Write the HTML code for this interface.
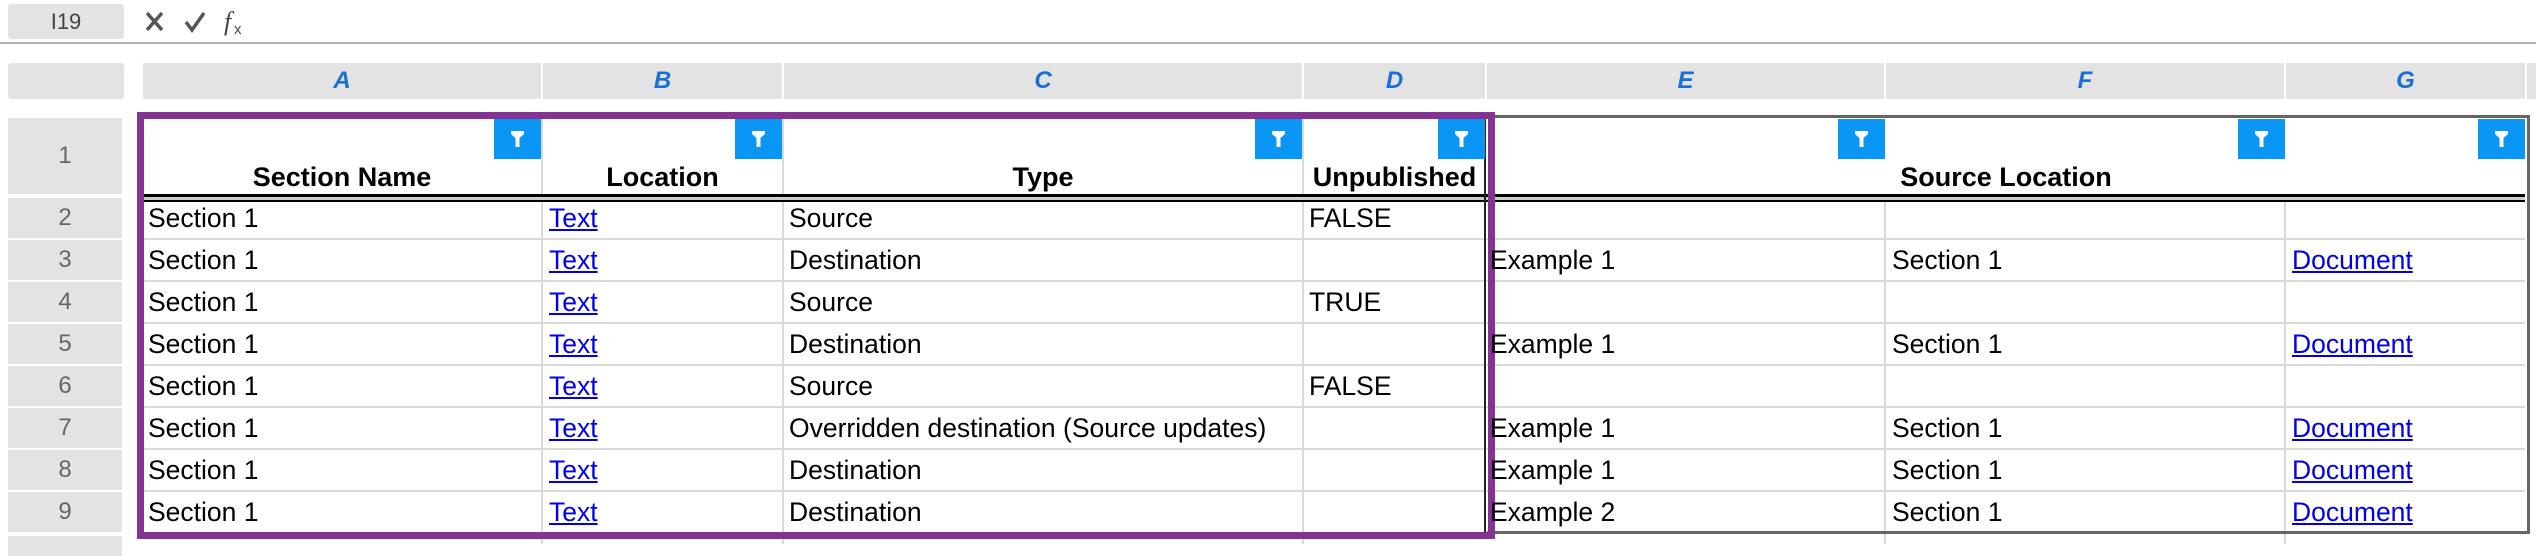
<!DOCTYPE html>
<html><head><meta charset="utf-8"><style>
*{margin:0;padding:0;box-sizing:border-box}
body{width:2536px;height:544px;background:#fff;position:relative;overflow:hidden;font-family:"Liberation Sans",Arial,sans-serif}
.a{position:absolute}
.hb{background:#e3e3e3;border-radius:3px}
.ch{position:absolute;top:63px;height:36px;background:#e3e3e3;color:#1a6fd6;font-weight:bold;font-style:italic;font-size:24px;text-align:center;line-height:36px}
.rh{position:absolute;left:8px;width:114px;background:#e3e3e3;color:#666;font-size:24px;text-align:center}
.c{position:absolute;font-size:26.5px;color:#000;white-space:nowrap}
.l{color:#0000ee;text-decoration:underline}
.f{position:absolute;top:119px;width:47px;height:40px;background:#0a96f5}
.f svg{position:absolute;left:17px;top:12px}
.h{position:absolute;font-size:27px;font-weight:bold;top:162px;text-align:center}
.vl{position:absolute;width:2px;background:#d9d9d9}
.hl{position:absolute;height:2px;background:#d9d9d9}
</style></head><body>
<div class="a hb" style="left:8px;top:4px;width:116px;height:35px;font-size:22px;color:#444;text-align:center;line-height:35px">I19</div>
<svg class="a" style="left:144px;top:8px" width="120" height="28" viewBox="0 0 120 28">
<path d="M3 5 L18 22 M18 5 L3 22" stroke="#555" stroke-width="3.5" fill="none"/>
<path d="M42 14 L48 22 L60 5" stroke="#555" stroke-width="3.5" fill="none"/>
<text x="80" y="22" font-family="Liberation Serif,serif" font-style="italic" font-size="26" fill="#444">f</text>
<text x="90" y="26" font-family="Liberation Sans,sans-serif" font-size="15" fill="#444">x</text>
</svg>
<div class="a" style="left:0;top:42px;width:2536px;height:2px;background:#b5b5b5"></div>

<div class="a hb" style="left:8px;top:63px;width:116px;height:36px"></div>
<div class="ch" style="left:143px;width:398px">A</div>
<div class="ch" style="left:543px;width:239px">B</div>
<div class="ch" style="left:784px;width:518px">C</div>
<div class="ch" style="left:1304px;width:181px">D</div>
<div class="ch" style="left:1487px;width:397px">E</div>
<div class="ch" style="left:1886px;width:398px">F</div>
<div class="ch" style="left:2286px;width:239px">G</div>
<div class="ch" style="left:2527px;width:20px"></div>

<div class="rh" style="top:118px;height:76px;line-height:76px">1</div>
<div class="rh" style="top:198px;height:40px;line-height:40px">2</div>
<div class="rh" style="top:240px;height:40px;line-height:40px">3</div>
<div class="rh" style="top:282px;height:40px;line-height:40px">4</div>
<div class="rh" style="top:324px;height:40px;line-height:40px">5</div>
<div class="rh" style="top:366px;height:40px;line-height:40px">6</div>
<div class="rh" style="top:408px;height:40px;line-height:40px">7</div>
<div class="rh" style="top:450px;height:40px;line-height:40px">8</div>
<div class="rh" style="top:492px;height:40px;line-height:40px">9</div>
<div class="rh" style="top:536px;height:20px"></div>

<div class="vl" style="left:541px;top:118px;height:426px"></div>
<div class="vl" style="left:782px;top:118px;height:426px"></div>
<div class="vl" style="left:1302px;top:118px;height:426px"></div>
<div class="vl" style="left:1884px;top:202px;height:342px"></div>
<div class="vl" style="left:2284px;top:202px;height:342px"></div>
<div class="hl" style="left:143px;top:238px;width:2382px"></div>
<div class="hl" style="left:143px;top:280px;width:2382px"></div>
<div class="hl" style="left:143px;top:322px;width:2382px"></div>
<div class="hl" style="left:143px;top:364px;width:2382px"></div>
<div class="hl" style="left:143px;top:406px;width:2382px"></div>
<div class="hl" style="left:143px;top:448px;width:2382px"></div>
<div class="hl" style="left:143px;top:490px;width:2382px"></div>

<div class="a" style="left:143px;top:194px;width:2382px;height:3px;background:#000"></div>
<div class="a" style="left:143px;top:197px;width:2382px;height:3px;background:#ccc"></div>
<div class="a" style="left:143px;top:200px;width:2382px;height:2px;background:#000"></div>

<div class="a" style="left:1484px;top:118px;width:2px;height:414px;background:#222"></div>

<div class="a" style="left:1487px;top:115px;width:1043px;height:419px;border:3px solid #666;border-left:none"></div>
<div class="a" style="left:137px;top:112px;width:1358px;height:427px;border:7px solid #843393"></div>

<div class="f" style="left:494px"><svg width="13" height="16" viewBox="0 0 13 16"><path d="M0 0 H13 V3 L8.5 7 V16 H4.5 V7 L0 3 Z" fill="#fff"/></svg></div>
<div class="f" style="left:735px"><svg width="13" height="16" viewBox="0 0 13 16"><path d="M0 0 H13 V3 L8.5 7 V16 H4.5 V7 L0 3 Z" fill="#fff"/></svg></div>
<div class="f" style="left:1255px"><svg width="13" height="16" viewBox="0 0 13 16"><path d="M0 0 H13 V3 L8.5 7 V16 H4.5 V7 L0 3 Z" fill="#fff"/></svg></div>
<div class="f" style="left:1438px"><svg width="13" height="16" viewBox="0 0 13 16"><path d="M0 0 H13 V3 L8.5 7 V16 H4.5 V7 L0 3 Z" fill="#fff"/></svg></div>
<div class="f" style="left:1838px"><svg width="13" height="16" viewBox="0 0 13 16"><path d="M0 0 H13 V3 L8.5 7 V16 H4.5 V7 L0 3 Z" fill="#fff"/></svg></div>
<div class="f" style="left:2238px"><svg width="13" height="16" viewBox="0 0 13 16"><path d="M0 0 H13 V3 L8.5 7 V16 H4.5 V7 L0 3 Z" fill="#fff"/></svg></div>
<div class="f" style="left:2478px"><svg width="13" height="16" viewBox="0 0 13 16"><path d="M0 0 H13 V3 L8.5 7 V16 H4.5 V7 L0 3 Z" fill="#fff"/></svg></div>

<div class="h" style="left:143px;width:398px">Section Name</div>
<div class="h" style="left:543px;width:239px">Location</div>
<div class="h" style="left:784px;width:518px">Type</div>
<div class="h" style="left:1304px;width:181px">Unpublished</div>
<div class="h" style="left:1487px;width:1038px">Source Location</div>

<div class="c" style="left:148px;top:203px">Section 1</div><div class="c l" style="left:549px;top:203px">Text</div><div class="c" style="left:789px;top:203px">Source</div><div class="c" style="left:1309px;top:203px">FALSE</div>
<div class="c" style="left:148px;top:245px">Section 1</div><div class="c l" style="left:549px;top:245px">Text</div><div class="c" style="left:789px;top:245px">Destination</div><div class="c" style="left:1490px;top:245px">Example 1</div><div class="c" style="left:1892px;top:245px">Section 1</div><div class="c l" style="left:2292px;top:245px">Document</div>
<div class="c" style="left:148px;top:287px">Section 1</div><div class="c l" style="left:549px;top:287px">Text</div><div class="c" style="left:789px;top:287px">Source</div><div class="c" style="left:1309px;top:287px">TRUE</div>
<div class="c" style="left:148px;top:329px">Section 1</div><div class="c l" style="left:549px;top:329px">Text</div><div class="c" style="left:789px;top:329px">Destination</div><div class="c" style="left:1490px;top:329px">Example 1</div><div class="c" style="left:1892px;top:329px">Section 1</div><div class="c l" style="left:2292px;top:329px">Document</div>
<div class="c" style="left:148px;top:371px">Section 1</div><div class="c l" style="left:549px;top:371px">Text</div><div class="c" style="left:789px;top:371px">Source</div><div class="c" style="left:1309px;top:371px">FALSE</div>
<div class="c" style="left:148px;top:413px">Section 1</div><div class="c l" style="left:549px;top:413px">Text</div><div class="c" style="left:789px;top:413px">Overridden destination (Source updates)</div><div class="c" style="left:1490px;top:413px">Example 1</div><div class="c" style="left:1892px;top:413px">Section 1</div><div class="c l" style="left:2292px;top:413px">Document</div>
<div class="c" style="left:148px;top:455px">Section 1</div><div class="c l" style="left:549px;top:455px">Text</div><div class="c" style="left:789px;top:455px">Destination</div><div class="c" style="left:1490px;top:455px">Example 1</div><div class="c" style="left:1892px;top:455px">Section 1</div><div class="c l" style="left:2292px;top:455px">Document</div>
<div class="c" style="left:148px;top:497px">Section 1</div><div class="c l" style="left:549px;top:497px">Text</div><div class="c" style="left:789px;top:497px">Destination</div><div class="c" style="left:1490px;top:497px">Example 2</div><div class="c" style="left:1892px;top:497px">Section 1</div><div class="c l" style="left:2292px;top:497px">Document</div>
</body></html>
